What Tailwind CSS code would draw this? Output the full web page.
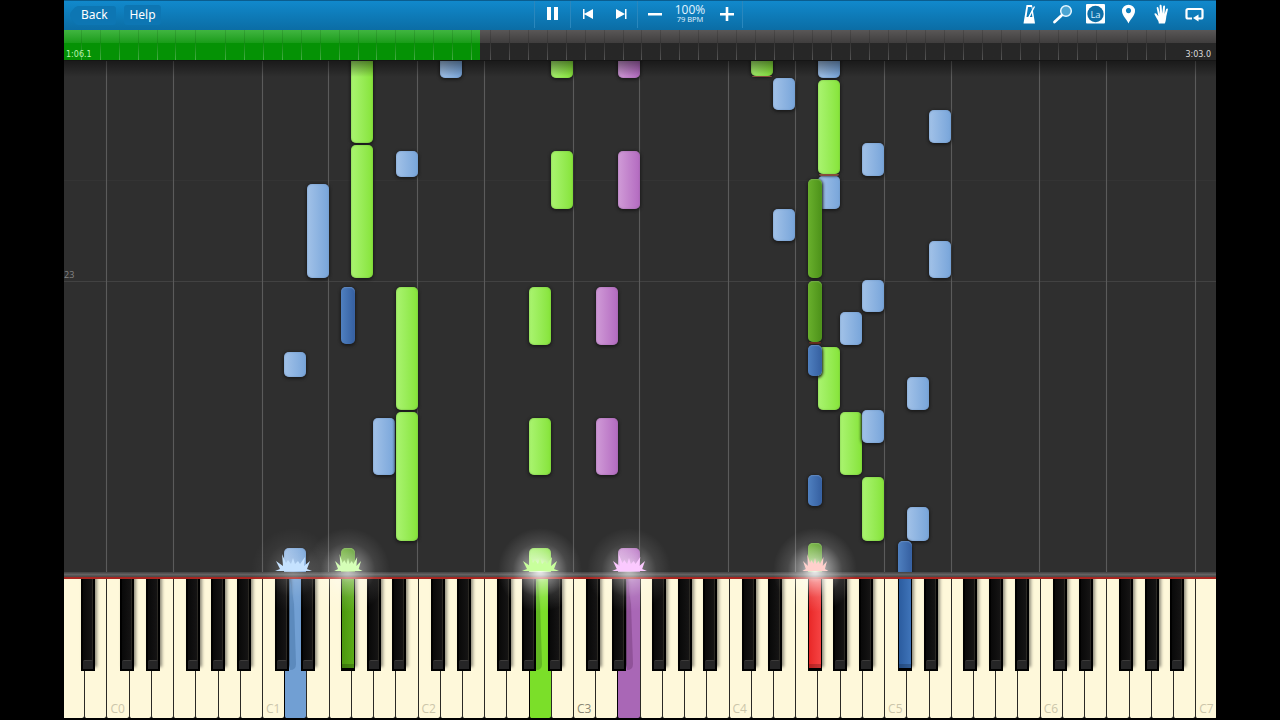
<!DOCTYPE html>
<html lang="en">
<head>
    <meta charset="UTF-8">
    <meta name="viewport" content="width=device-width, initial-scale=1.0">
    <title>Piano Player</title>
    <script src="https://cdn.jsdelivr.net/npm/@tailwindcss/browser@4"></script>
</head>
<body class="bg-black overflow-hidden font-['Open_Sans',sans-serif]">
    <div class="w-[1152px] h-[720px] mx-auto flex flex-col overflow-hidden">
        <!-- Toolbar -->
        <header class="relative z-20 h-[30px] shrink-0 flex items-center pb-0.5 text-white bg-linear-to-b from-[#1189cc] to-[#0b6da5] border-t border-[#0a5d8f]">
            <button class="ml-1.5 w-[46px] h-5 flex items-center relative">
                <svg class="absolute inset-0" width="46" height="20"><path d="M8 1H43Q46 1 46 4V17Q46 20 43 20H8Q5 20 1 13Q-1 10 1 7Q5 1 8 1Z" fill="#0d76b3"/></svg>
                <span class="relative ml-[11px] text-[12px] leading-5 font-['Noto_Sans',sans-serif]">Back</span>
            </button>
            <button class="ml-2 w-[37px] h-5 rounded-[3px] bg-[#0d76b3] text-[12px] leading-5 font-['Noto_Sans',sans-serif]">Help</button>

            <div class="ml-[373px] w-[209px] h-[27px] flex items-center border-x border-[#2a87bd]">
                <svg width="209" height="27" viewBox="535 1 209 27" class="shrink-0 -mr-[209px]" fill="#fff">
                    <path d="M547 7h4v13h-4zM554 7h4v13h-4zM583 9h1.500v10h-1.500zM593 9v10l-9-5zM616 9v10l9-5zM625 9h1.500v10h-1.500zM648 13h14v2.600h-14zM720 13h14v2.600h-14zM725.700 7h2.600v14h-2.600z"/>
                    <path d="M570.500 1v27M637.500 1v27" stroke="#2a87bd"/>
                </svg>
                <div class="ml-[135px] -mt-px w-10 flex flex-col items-center text-[#e2f4ff]">
                    <span class="text-[12px] leading-[11px]">100%</span>
                    <span class="text-[7.5px] leading-[9px] whitespace-nowrap">79 BPM</span>
                </div>
            </div>

            <svg width="200" height="27" viewBox="1012 1 200 27" class="ml-auto mr-1 shrink-0" fill="#fff">
                <!-- metronome -->
                <path fill-rule="evenodd" d="M1026.500 5h5.500l3 18.500h-11.500zM1028 7l-1.500 10h2l3.500-7-.5-3zM1031.600 12l-1.800 5h2.600z"/>
                <path d="M1028.500 18l6-11.500" stroke="#fff" stroke-width="1.300"/>
                <!-- magnifier -->
                <circle cx="1066" cy="11" r="5.300" fill="#4ba5d3" stroke="#e8f7ff" stroke-width="1.500"/>
                <path d="M1061.500 15.500l-7 6.500" stroke="#fff" stroke-width="2.800" stroke-linecap="round"/>
                <!-- note names -->
                <rect x="1086" y="4" width="19" height="19.500" rx="1"/>
                <circle cx="1095.500" cy="14" r="8.200" fill="#0c6ea6"/>
                <text x="1095.500" y="17.500" font-size="9.500" text-anchor="middle" fill="#d5efff">La</text>
                <!-- marker -->
                <path fill-rule="evenodd" d="M1128.500 23.500c-1.500-4-6.500-8-6.500-12.500a6.500 6.200 0 0 1 13 0c0 4.500-5 8.500-6.500 12.500zM1128.500 8a2.600 2.600 0 1 0 .01 0z"/>
                <!-- hand -->
                <path transform="translate(.8 0)" d="M1158 23.500c0-2-1-3.500-2-5l-2.200-4c-.6-1.300 1-1.800 1.800-.8l2 2.500-1.700-8c-.2-1.300 1.500-1.600 1.800-.3l1.500 6-.4-8c0-1.400 1.900-1.400 2 0l.6 7.500.9-7c.2-1.300 2-1.100 1.900.2l-.4 7.500 1.600-5c.5-1.200 2-.7 1.700.5l-1.600 7c-.3 3-.5 5-1.500 6.900z"/>
                <!-- loop -->
                <path d="M1192 18.500h-4q-1.500 0-1.500-1.500v-6.500q0-1.500 1.500-1.500h13q1.500 0 1.500 1.500v6.500q0 1.500-1.500 1.500h-3" fill="none" stroke="#fff" stroke-width="2.200"/>
                <path d="M1193 18l5.500-3.500v7z"/>
            </svg>
        </header>

        <!-- Song progress -->
        <div id="progress" class="relative z-10 h-[31px] shrink-0 flex items-end justify-between px-0.5 overflow-hidden bg-linear-to-b from-[#595757] from-0% via-[#403e3e] via-42% to-[#272727] to-45% border-b border-[#151515] text-white text-[8px] leading-3">
            <div class="absolute inset-y-0 left-0 w-[416px] bg-linear-to-b from-[#40b540] from-0% via-[#199d19] via-42% to-[#059205] to-45%"></div>
            <span class="relative z-[1] -mb-px font-['DejaVu_Sans',sans-serif] text-[8px] text-[#b9f2b0]">1:06.1</span>
            <span class="relative z-[1] -mb-px mr-[3px] font-['DejaVu_Sans',sans-serif] text-[8px] text-[#dddddd]">3:03.0</span>
        </div>

        <!-- Falling notes -->
        <main id="roll" class="relative isolate h-[511px] shrink-0 bg-[#2f2f2f]">
            <div class="absolute top-[220px] inset-x-0 h-px bg-[#424242]"></div>
            <div class="absolute top-[119px] inset-x-0 h-px bg-[#343434]"></div>
            <span class="absolute top-[208px] left-0 text-[9px] leading-3 text-[#858585]">23</span>
            <div class="absolute z-10 top-0 inset-x-0 h-4 bg-linear-to-b from-black/45 to-transparent"></div>
        </main>

        <!-- Keyboard -->
        <div class="relative h-[148px] shrink-0 bg-black">
            <div class="relative z-[1] h-[5px] bg-linear-to-b from-[#414141] via-[#646262] to-[#4c4646]"></div>
            <div class="relative z-[1] h-[2px] bg-[#a92520]"></div>
            <div id="whites" class="flex h-[139px] -ml-[2px] w-[1155.6px]"></div>
            <div id="blacks" class="absolute inset-x-0 top-1.5 h-[93px]"></div>
            <div id="glows" class="absolute z-[2] inset-x-0 top-0"></div>
        </div>
    </div>

    <script>
        const WHITE = 22.222;
        const OCTAVE = WHITE * 7;
        const FIRST_C = 42.3;

        const add = (parent, cls, style = {}, html = '') => {
            const el = document.createElement('div');
            el.className = cls;
            Object.assign(el.style, style);
            el.innerHTML = html;
            parent.appendChild(el);
            return el;
        };
        const $ = id => document.getElementById(id);

        // measure ticks on the progress bar
        const ticks = [17, 36, 54.5, 74, 93, 111, 131, 1063, 1082, 1101];
        for (let i = 0; i < 47; i++) ticks.push(161 + i * 18.93);
        ticks.forEach(x => add($('progress'), x < 416
            ? 'absolute top-0 h-[30px] w-px bg-linear-to-b from-[#36a236] via-[#118c11] via-45% to-[#43b043]'
            : 'absolute top-0 h-[30px] w-px bg-linear-to-b from-[#4c4a4a] via-[#353434] via-45% to-[#565656]',
            { left: Math.round(x) + 'px' }));

        // lane lines at every C and F
        for (let o = 0; o < 8; o++) {
            [0, 3 * WHITE].forEach(d => {
                const x = FIRST_C + o * OCTAVE + d;
                if (x < 1152) add($('roll'), 'absolute inset-y-0 w-px bg-[#5b5b5b] shadow-[0_0_1px_#4a4a4a]', { left: Math.round(x - 0.2) + 'px' });
            });
        }

        // [type, left, top, height]
        const styles = {
            blue: 'absolute w-[22px] rounded-[5px] bg-linear-to-r from-[#a2c2e8] to-[#78a5da] shadow-[0_1px_3px_1px_#1b1b1b,inset_0_0_2px_#6f93c2]',
            lime: 'absolute w-[22px] rounded-[5px] bg-linear-to-r from-[#aaf470] to-[#86e438] shadow-[0_1px_3px_1px_#1b1b1b,inset_0_0_2px_#74b944]',
            pink: 'absolute w-[22px] rounded-[5px] bg-linear-to-r from-[#d09bd7] to-[#b36ac0] shadow-[0_1px_3px_1px_#1b1b1b,inset_0_0_2px_#9966a3]',
            navy: 'absolute z-[1] w-[14px] rounded-[5px] bg-linear-to-r from-[#4f80c0] to-[#355fa0] shadow-[0_1px_3px_1px_#1b1b1b,inset_0_1px_1px_#6088bf]',
            green: 'absolute z-[1] w-[14px] rounded-[5px] bg-linear-to-r from-[#69b02c] to-[#4c9119] shadow-[0_1px_3px_1px_#1b1b1b,inset_0_1px_1px_#74ad48]',
            red: 'absolute w-5 ml-px rounded-b-[2px] bg-[#854c3c]',
            darkred: 'absolute z-[1] w-3 ml-px rounded-b-[2px] bg-[#6b2f20]'
        };
        const notes = [
            ['lime', 351, 50, 93], ['lime', 351, 145, 133], ['blue', 307, 184, 94], ['blue', 396, 151, 26],
            ['blue', 440, 50, 28], ['lime', 551, 50, 28], ['pink', 618, 50, 28], ['lime', 751, 50, 26], ['red', 751, 76, 1],
            ['blue', 773, 78, 32], ['blue', 818, 50, 28], ['blue', 818, 176, 33], ['lime', 818, 80, 94], ['red', 818, 174, 2],
            ['blue', 862, 143, 33], ['blue', 929, 110, 33], ['blue', 773, 209, 32], ['blue', 929, 241, 37],
            ['green', 808, 179, 99], ['green', 808, 281, 61], ['darkred', 808, 342, 2], ['lime', 551, 151, 58], ['pink', 618, 151, 58],
            ['navy', 341, 287, 57], ['lime', 396, 287, 123], ['blue', 284, 352, 25], ['blue', 373, 418, 57],
            ['lime', 396, 412, 129], ['lime', 529, 287, 58], ['pink', 596, 287, 58], ['lime', 529, 418, 57],
            ['pink', 596, 418, 57], ['blue', 862, 280, 32], ['blue', 840, 312, 33], ['lime', 818, 347, 63],
            ['navy', 808, 345, 31], ['blue', 907, 377, 33], ['lime', 840, 412, 63], ['blue', 862, 410, 33],
            ['lime', 862, 477, 64], ['navy', 808, 475, 31], ['blue', 907, 507, 34], ['navy', 898, 541, 37],
            ['blue', 284, 548, 30], ['green', 341, 548, 30], ['lime', 529, 548, 30],
            ['pink', 618, 548, 30], ['green', 808, 543, 35]
        ];
        const clip = add($('roll'), 'absolute inset-0 overflow-hidden');
        notes.forEach(([type, x, y, h]) =>
            add(clip, styles[type], { left: (x - 64) + 'px', top: (y - 61) + 'px', height: h + 'px' }));

        // white keys, A0 to C8
        const pressedWhite = {
            10: 'flex-1 relative border-l border-black rounded-b-[2px] bg-[#719fd3]',
            21: 'flex-1 relative border-l border-black rounded-b-[2px] bg-[#7bdf29]',
            25: 'flex-1 relative border-l border-black rounded-b-[2px] bg-[#a967b6]'
        };
        for (let i = 0; i < 52; i++) {
            const c = i % 7 === 2 ? (i - 2) / 7 : -1;
            const tone = c === 3 ? 'text-[#8b8774]' : 'text-[#ccc6aa]';
            const label = c >= 0 ? `<span class="absolute bottom-0 left-[3px] text-[12px] leading-[19px] ${tone}">C${c}</span>` : '';
            add($('whites'), pressedWhite[i] || 'flex-1 relative border-l border-[#2b2a25] rounded-b-[2px] bg-[#fef8da]', {}, label);
        }

        // black keys
        const pressedBlack = {
            277: 'bg-linear-to-r from-[#4b970f] to-[#5bac18]',
            744: 'bg-linear-to-r from-[#e92727] to-[#f64343]',
            834: 'bg-linear-to-r from-[#2b5c9f] to-[#3f74b9]'
        };
        const offsets = [13.6, 39.6, 79.3, 105, 130.6];
        for (let o = -1; o < 7; o++) {
            offsets.forEach((d, i) => {
                if (o < 0 && i < 4) return;
                const x = Math.round(FIRST_C + o * OCTAVE + d - 0.1);
                const hit = Object.keys(pressedBlack).find(k => Math.abs(k - x) < 4);
                const key = add($('blacks'), 'absolute top-0 w-[14px] h-[93px] bg-black shadow-[2px_-4px_3px_#00000070]', { left: x + 'px' });
                if (hit) {
                    add(key, 'absolute inset-x-px top-0 bottom-[3px] ' + pressedBlack[hit]);
                    add(key, 'absolute inset-x-px bottom-[3px] h-1 bg-black/20');
                } else {
                    add(key, 'absolute left-0.5 right-0.5 top-0 bottom-[10px] bg-linear-to-r from-[#090909] to-[#151414] border-r border-[#2a2823]');
                    add(key, 'absolute inset-x-0.5 bottom-[2px] h-[9px] rounded-t-[2px] bg-[#252526] border-t border-[#3d3c3b]');
                }
            });
        }

        // shade that a black key casts on the pressed white key to its right
        [[226, '#5c8abd'], [472, '#62b822'], [563, '#905299']].forEach(([x, color]) =>
            add($('glows'), 'absolute', { left: x + 'px', top: '7px' }, `
                <svg width="8" height="92"><path d="M0 0L4 25L6 85Q6 91 0 91Z" fill="${color}"/></svg>`));

        // sparks where a note meets the keyboard: [centre, flame colour, halo opacity, flame half width]
        [[229, '#c5e2ff', 0.3, 17], [284, '#d5ffb7', 0.7, 13], [476, '#c8ff9c', 0.95, 17], [565, '#fbc9ff', 0.65, 16], [751, '#ffd0cc', 0.95, 12]].forEach(([x, color, a, w], i) => {
            add($('glows'), 'absolute', { left: (x - 50) + 'px', top: '-52px' }, `
                <svg width="100" height="100" viewBox="-50 -50 100 100">
                    <defs><radialGradient id="halo${i}">
                        <stop offset="0" stop-color="#fff" stop-opacity="${a}"/>
                        <stop offset=".3" stop-color="#fff" stop-opacity="${a * 0.5}"/>
                        <stop offset=".65" stop-color="#fff" stop-opacity="${a * 0.13}"/>
                        <stop offset="1" stop-color="#fff" stop-opacity="0"/>
                    </radialGradient></defs>
                    <circle r="42" fill="url(#halo${i})"/>
                    <path transform="scale(${w / 17} 1)" fill="${color}" d="M-18 1L-13-1L-17-9L-10-4L-11-16L-7-7L-5-10L-2-6L0-12L2-6L5-9L7-6L12-13L11-4L17-9L14-1L19 1Z"/>
                </svg>`);
        });
    </script>
</body>
</html>
